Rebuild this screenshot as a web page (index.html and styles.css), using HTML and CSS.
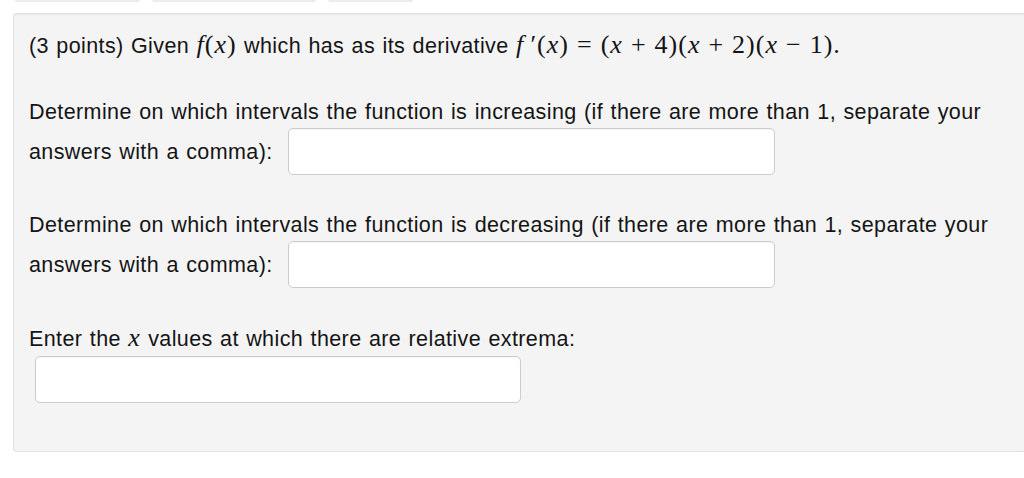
FILE: index.html
```html
<!DOCTYPE html>
<html>
<head>
<meta charset="utf-8">
<link rel="stylesheet" href="styles.css">
</head>
<body>
<div class="tabs">
  <div class="tab t1"></div>
  <div class="tab t2"></div>
  <div class="tab t3"></div>
</div>
<div class="well">
  <p class="q first">(3 points) Given <span class="m"><i>f</i>(<i>x</i>)</span> which has as its derivative <span class="m"><i>f</i>&thinsp;′(<i>x</i>)<span class="op">=</span>(<i>x</i><span class="op">+</span>4)(<i>x</i><span class="op">+</span>2)(<i>x</i><span class="op">−</span>1).</span></p>
  <p class="q">Determine on which intervals the function is increasing (if there are more than 1, separate your answers with a comma): <span class="ans"></span></p>
  <p class="q">Determine on which intervals the function is decreasing (if there are more than 1, separate your answers with a comma): <span class="ans"></span></p>
  <p class="q last">Enter the <span class="m"><i>x</i></span> values at which there are relative extrema:</p>
  <div class="ans block"></div>
</div>
</body>
</html>
```
FILE: styles.css
```css
html, body {
  margin: 0;
  padding: 0;
  background: #ffffff;
}
body {
  font-family: "Liberation Sans", Arial, Helvetica, sans-serif;
  font-size: 21.5px;
  letter-spacing: 0.4px;
  word-spacing: 1px;
  color: #141414;
}
.tabs {
  display: flex;
  gap: 12px;
  padding-left: 15px;
  height: 2px;
}
.tab {
  height: 2px;
  background: #ececec;
  border-radius: 0 0 4px 4px;
}
.t1 { width: 125px; }
.t2 { width: 164px; }
.t3 { width: 85px; }
.well {
  margin: 11px 0 0 13px;
  background: #f4f4f4;
  border: 1px solid #e2e2e2;
  border-right: none;
  border-radius: 4px 0 0 4px;
  box-shadow: inset 0 1px 1px rgba(0,0,0,0.05);
  padding: 11px 30px 48px 15px;
  height: 378px;
}
.q {
  margin: 0;
  line-height: 40px;
}
.q.first { margin-bottom: 26px; }
.q:not(.first):not(.last) { margin-bottom: 30px; }
.m {
  font-family: "Liberation Serif", "Times New Roman", serif;
  font-size: 26px;
  letter-spacing: 1px;
  word-spacing: 0;
}
.m i { font-style: italic; }
.op { padding: 0 8px; }
.ans {
  display: inline-block;
  vertical-align: middle;
  width: 485px;
  height: 45px;
  margin-left: 8px;
  background: #ffffff;
  border: 1px solid #cccccc;
  border-radius: 5px;
  box-shadow: inset 0 1px 1px rgba(0,0,0,0.04);
  margin-top: -4px;
}
.ans.block {
  display: block;
  margin: -3px 0 0 6px;
  width: 484px;
}
```
